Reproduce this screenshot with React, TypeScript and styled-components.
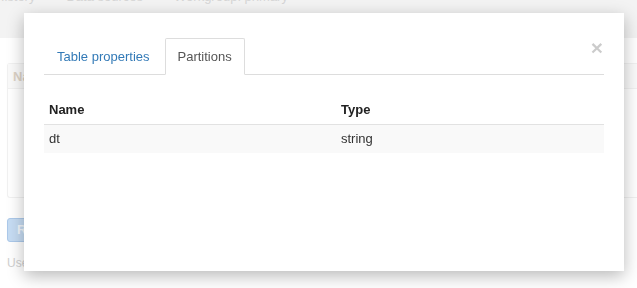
import React from "react";
import styled, { createGlobalStyle } from "styled-components";

const GlobalStyle = createGlobalStyle`
  html, body {
    margin: 0;
    padding: 0;
    background: #ffffff;
    overflow: hidden;
  }
  body {
    font-family: "Liberation Sans", Arial, Helvetica, sans-serif;
    font-size: 13px;
    color: #333;
  }
  * { box-sizing: border-box; }
`;

const Page = styled.div`
  width: 637px;
  height: 288px;
  display: flex;
  flex-direction: column;
`;

const Navbar = styled.div`
  height: 38px;
  background: #f3f3f3;
  display: flex;
  align-items: flex-start;
  gap: 31px;
  flex-shrink: 0;
`;

const NavItem = styled.span`
  margin-top: -10px;
  font-size: 13px;
  line-height: 14px;
  color: #d6d6d6;
  white-space: nowrap;
  &:first-child { margin-left: -5px; }
`;

const Main = styled.div`
  padding: 25px 0 0 7px;
  display: flex;
  flex-direction: column;
`;

const Card = styled.div`
  height: 135px;
  border: 1px solid #f1f1f1;
  border-right: none;
  border-radius: 3px 0 0 3px;
  display: flex;
  flex-direction: column;
`;

const CardHeader = styled.div`
  height: 25px;
  background: #fafafa;
  border-bottom: 1px solid #f1f1f1;
  padding: 5px 5px;
  font-weight: bold;
  color: #ddd3c6;
  font-size: 13px;
`;

const RunButton = styled.div`
  margin-top: 20px;
  width: 60px;
  height: 24px;
  background: #c6dcf3;
  border: 1px solid #acc9ea;
  border-radius: 3px;
  color: #f2f7fc;
  font-weight: bold;
  font-size: 13px;
  line-height: 22px;
  padding-left: 9px;
`;

const Hint = styled.div`
  margin-top: 14px;
  color: #d0d0d0;
  font-size: 12px;
`;

const Modal = styled.div`
  position: fixed;
  top: 13px;
  left: 24px;
  width: 600px;
  height: 258px;
  background: #fff;
  box-shadow: 0 5px 16px rgba(0, 0, 0, 0.28);
  padding: 25px 20px 20px;
`;

const Close = styled.button`
  position: absolute;
  top: 24px;
  right: 21px;
  border: none;
  background: transparent;
  padding: 0;
  font-family: "Liberation Sans", Arial, sans-serif;
  font-size: 21px;
  font-weight: bold;
  line-height: 1;
  color: #000;
  opacity: 0.2;
  cursor: pointer;
`;

const Tabs = styled.ul`
  list-style: none;
  margin: 0;
  padding: 0;
  display: flex;
  border-bottom: 1px solid #dddddd;
`;

const Tab = styled.li<{ $active?: boolean }>`
  margin-right: 2px;
  margin-bottom: -1px;
  padding: 8px 12px;
  line-height: 19px;
  font-size: 13px;
  border: 1px solid ${(p) => (p.$active ? "#dddddd" : "transparent")};
  border-bottom-color: ${(p) => (p.$active ? "#ffffff" : "transparent")};
  border-radius: 2px 2px 0 0;
  background: ${(p) => (p.$active ? "#ffffff" : "transparent")};
  color: ${(p) => (p.$active ? "#555555" : "#337ab7")};
  cursor: pointer;
`;

const Table = styled.table`
  margin-top: 20px;
  width: 100%;
  border-collapse: collapse;
  font-size: 13px;
`;

const Th = styled.th<{ $w?: number }>`
  text-align: left;
  padding: 5px;
  line-height: 19px;
  font-weight: bold;
  color: #222;
  border-bottom: 1px solid #e2e2e2;
  width: ${(p) => (p.$w ? `${p.$w}px` : "auto")};
`;

const Tr = styled.tr<{ $striped?: boolean }>`
  background: ${(p) => (p.$striped ? "#f9f9f9" : "transparent")};
`;

const Td = styled.td`
  padding: 5px;
  line-height: 18px;
  color: #333;
`;

const rows = [{ name: "dt", type: "string" }];

export default function App() {
  return (
    <>
      <GlobalStyle />
      <Page>
        <Navbar>
          <NavItem>History</NavItem>
          <NavItem>Data sources</NavItem>
          <NavItem>Workgroup: primary</NavItem>
        </Navbar>
        <Main>
          <Card>
            <CardHeader>Name</CardHeader>
          </Card>
          <RunButton>Run</RunButton>
          <Hint>Use Ctrl + Enter to run query, Ctrl + Space to autocomplete</Hint>
        </Main>
      </Page>
      <Modal>
        <Close aria-label="Close">×</Close>
        <Tabs>
          <Tab>Table properties</Tab>
          <Tab $active>Partitions</Tab>
        </Tabs>
        <Table>
          <thead>
            <tr>
              <Th $w={292}>Name</Th>
              <Th>Type</Th>
            </tr>
          </thead>
          <tbody>
            {rows.map((r, i) => (
              <Tr key={r.name} $striped={i % 2 === 0}>
                <Td>{r.name}</Td>
                <Td>{r.type}</Td>
              </Tr>
            ))}
          </tbody>
        </Table>
      </Modal>
    </>
  );
}
